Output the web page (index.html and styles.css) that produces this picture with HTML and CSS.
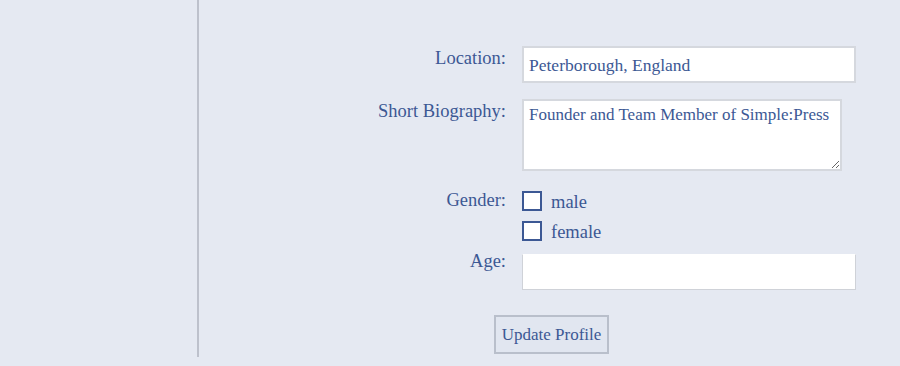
FILE: index.html
```html
<!DOCTYPE html>
<html>
<head>
<meta charset="utf-8">
<link rel="stylesheet" href="styles.css">
</head>
<body>
<div class="page">
  <aside class="sidebar"></aside>
  <main class="main">
    <form class="profile">
      <div class="row">
        <label class="label">Location:</label>
        <div class="field"><input class="text-input" type="text" value="Peterborough, England"></div>
      </div>
      <div class="row">
        <label class="label">Short Biography:</label>
        <div class="field"><textarea class="bio" wrap="off">Founder and Team Member of Simple:Press</textarea></div>
      </div>
      <div class="row row-gender">
        <label class="label">Gender:</label>
        <div class="field options">
          <label class="option"><span class="box"></span><span class="opt-text">male</span></label>
          <label class="option"><span class="box"></span><span class="opt-text">female</span></label>
        </div>
      </div>
      <div class="row row-age">
        <label class="label">Age:</label>
        <div class="field"><input class="text-input age" type="text" value=""></div>
      </div>
      <div class="actions">
        <button class="submit" type="button">Update Profile</button>
      </div>
    </form>
  </main>
</div>
</body>
</html>
```

FILE: styles.css
```css
html, body {
  margin: 0;
  padding: 0;
  background: #e5e9f2;
  height: 366px;
  overflow: hidden;
}
body {
  font-family: "Liberation Serif", "Times New Roman", serif;
  color: #3c5894;
}
.page {
  display: flex;
  height: 357px;
}
.sidebar {
  width: 197px;
  flex: none;
  border-right: 2px solid #bdc1cc;
}
.main {
  flex: 1;
  padding-top: 46px;
}
.profile {
  display: flex;
  flex-direction: column;
}
.row {
  display: grid;
  grid-template-columns: 307px 334px;
  column-gap: 16px;
  margin-bottom: 16px;
}
.label {
  text-align: right;
  font-size: 18.5px;
  line-height: 22px;
  padding-top: 1px;
}
.text-input {
  box-sizing: border-box;
  display: block;
  width: 334px;
  height: 37px;
  margin: 0;
  border: 2px solid #d5d8de;
  background: #fff;
  padding: 1px 5px 0;
  font-family: inherit;
  font-size: 17.5px;
  color: #3c5894;
  outline: none;
}
.bio {
  box-sizing: border-box;
  display: block;
  width: 320px;
  height: 72px;
  margin: 0;
  border: 2px solid #d5d8de;
  background: #fff;
  padding: 3px 5px;
  font-family: inherit;
  font-size: 17px;
  line-height: 22px;
  color: #3c5894;
  resize: both;
  overflow: hidden;
  white-space: pre;
  outline: none;
}
.row-gender {
  margin-top: 4px;
  margin-bottom: 13px;
}
.row-gender .label {
  padding-top: 0;
  line-height: 18px;
}
.options {
  display: flex;
  flex-direction: column;
  gap: 10px;
}
.option {
  display: flex;
  align-items: center;
  gap: 9px;
  font-size: 18.5px;
  line-height: 20px;
  height: 20px;
}
.box {
  box-sizing: border-box;
  width: 20px;
  height: 20px;
  border: 2px solid #3c5894;
  background: #fff;
}
.opt-text {
  position: relative;
  top: 1px;
}
.row-age .label {
  padding-top: 0;
  line-height: 14px;
}
.age {
  height: 36px;
  border: 1px solid #cfd2d8;
  border-top-color: #fff;
}
.actions {
  display: flex;
  padding-left: 295px;
  margin-top: 9px;
}
.submit {
  box-sizing: border-box;
  width: 115px;
  height: 39px;
  border: 2px solid #b9bfcb;
  background: #e1e6f0;
  font-family: inherit;
  font-size: 17px;
  color: #3c5894;
  padding: 0;
}
```
